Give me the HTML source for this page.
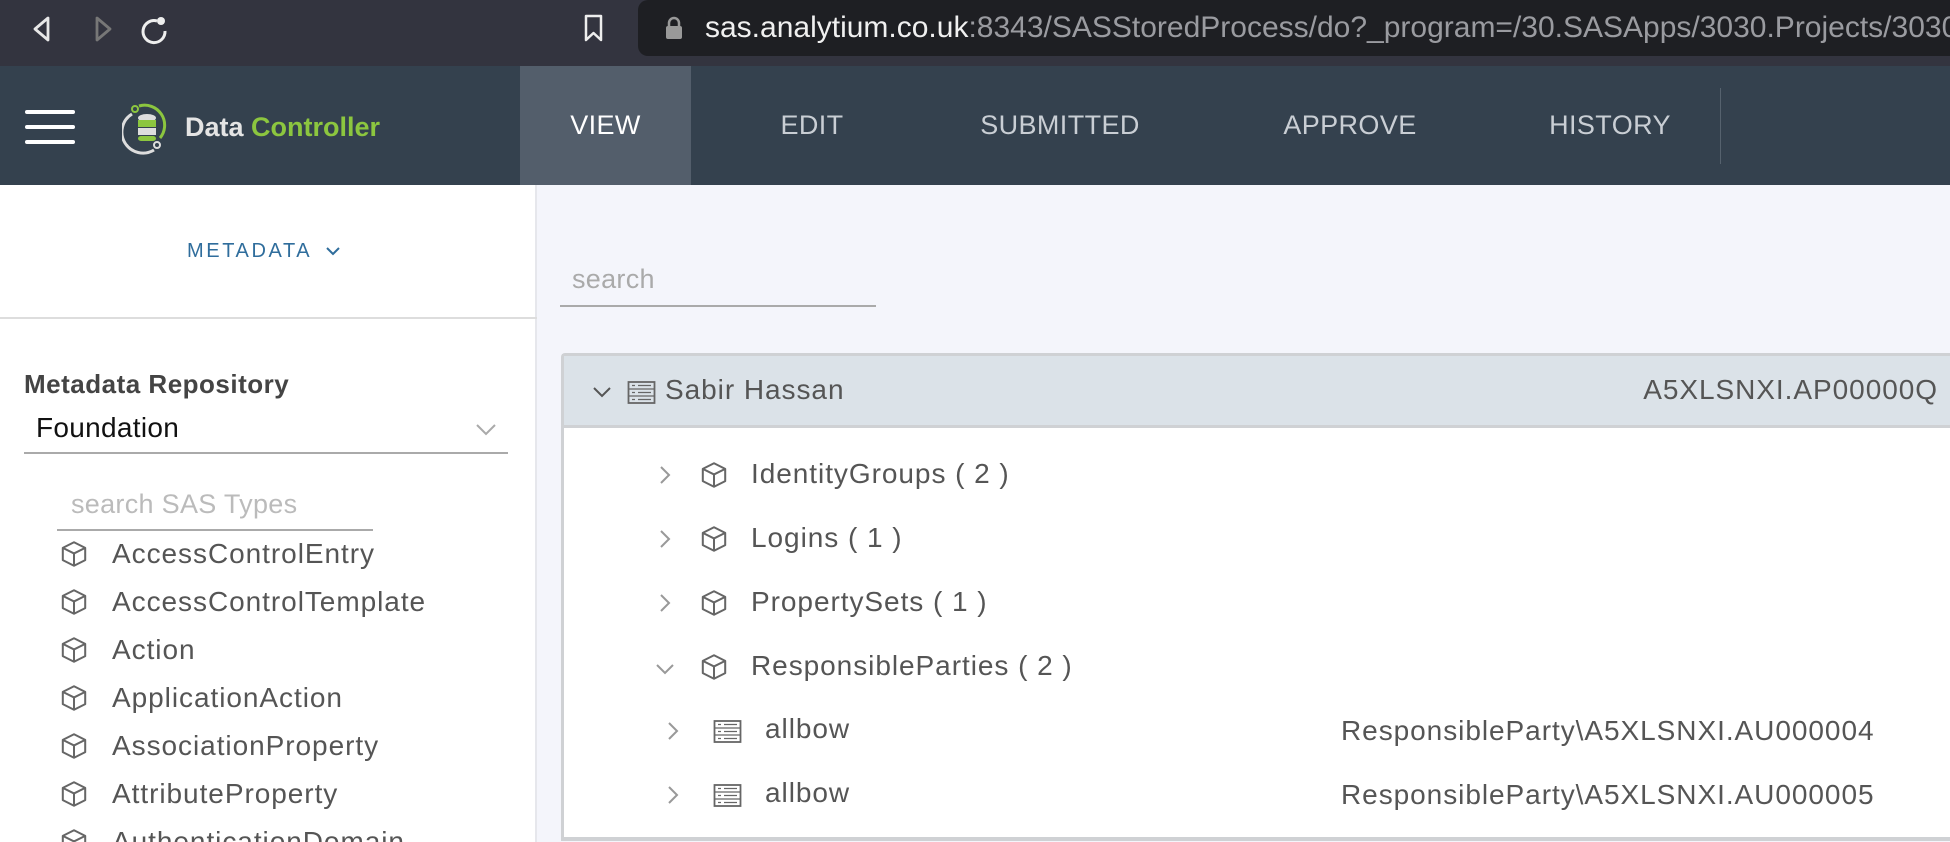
<!DOCTYPE html>
<html><head><meta charset="utf-8"><style>
*{margin:0;padding:0;box-sizing:border-box}
html,body{width:1950px;height:842px;overflow:hidden}
body{background:#f4f5fb;font-family:"Liberation Sans",sans-serif}
#w{position:relative;width:1950px;height:842px;overflow:hidden}
.abs{position:absolute}
.chrome{left:0;top:0;width:1950px;height:66px;background:#33343f}
.url{left:638px;top:0;width:1320px;height:56px;background:#1e1f23;border-radius:10px 0 0 10px}
.nav{left:0;top:66px;width:1950px;height:119px;background:#34414e}
.navi{top:66px;height:119px;line-height:119px;color:#c9ced4;font-size:27px;letter-spacing:.4px}
.side{left:0;top:185px;width:537px;height:657px;background:#fff;border-right:2px solid #e6e7ec}
.t{color:#555;font-size:28px;letter-spacing:.95px;white-space:nowrap}
.panel{left:561px;top:353px;width:1400px;height:487px;background:#fff;border:3px solid #cfd1d4;border-right:none;border-radius:4px 0 0 0}
</style></head><body><div id="w">
<div class="abs chrome"></div>
<svg class="abs" style="left:28px;top:13px" width="160" height="40" viewBox="0 0 160 40">
<path d="M20 5 L7 16 L20 27 Z" fill="none" stroke="#e8e8e8" stroke-width="2.8" stroke-linejoin="round"/>
<path d="M69 5 L82 16 L69 27 Z" fill="none" stroke="#777" stroke-width="2.8" stroke-linejoin="round"/>
<path d="M129 8 A11 11 0 1 0 137 18" fill="none" stroke="#eee" stroke-width="3"/>
<circle cx="133" cy="8" r="4" fill="#eee"/>
</svg>
<svg class="abs" style="left:582px;top:14px" width="24" height="30"><path d="M4 2 H19 V26 L11.5 19 L4 26 Z" fill="none" stroke="#eee" stroke-width="2.5" stroke-linejoin="round"/></svg>
<div class="abs url"></div>
<svg class="abs" style="left:665px;top:16px" width="18" height="24"><path d="M4 10 V7 A5 5 0 0 1 14 7 V10" fill="none" stroke="#999" stroke-width="2.5"/><rect x="1" y="10" width="16" height="13" rx="2" fill="#999"/></svg>
<div class="abs" style="left:705px;top:10px;font-size:30px;color:#f0f0f0;white-space:nowrap;line-height:36px">sas.analytium.co.uk<span style="color:#9a9ba0">:8343/SASStoredProcess/do?_program=/30.SASApps/3030.Projects/3030</span></div>

<div class="abs nav"></div>
<div class="abs" style="left:25px;top:110px;width:50px;height:4px;background:#fff;box-shadow:0 15px 0 #fff,0 30px 0 #fff;border-radius:2px"></div>
<svg class="abs" style="left:122px;top:100px" width="50" height="55" viewBox="0 0 46 55">
<path d="M8 14 A20 20 0 0 0 30 50" fill="none" stroke="#ddd" stroke-width="3"/>
<path d="M15 6 A20 20 0 0 1 36 38" fill="none" stroke="#8cc63f" stroke-width="3"/>
<circle cx="33" cy="45" r="3" fill="none" stroke="#ddd" stroke-width="2"/>
<circle cx="11" cy="9" r="3" fill="none" stroke="#8cc63f" stroke-width="2"/>
<ellipse cx="23" cy="18" rx="9" ry="4" fill="#ddd"/><rect x="14" y="20" width="18" height="7" fill="#8cc63f"/><rect x="14" y="28" width="18" height="7" fill="#ddd"/><rect x="14" y="36" width="18" height="5" rx="3" fill="#8cc63f"/>
</svg>
<div class="abs" style="left:185px;top:109px;font-size:27px;color:#e4e4e4;line-height:36px;font-weight:bold">Data <span style="color:#8cc63f">Controller</span></div>
<div class="abs" style="left:520px;top:66px;width:171px;height:119px;background:#535e6b"></div>
<div class="abs navi" style="left:520px;width:171px;text-align:center;color:#fff">VIEW</div>
<div class="abs navi" style="left:742px;width:140px;text-align:center">EDIT</div>
<div class="abs navi" style="left:960px;width:200px;text-align:center">SUBMITTED</div>
<div class="abs navi" style="left:1260px;width:180px;text-align:center">APPROVE</div>
<div class="abs navi" style="left:1520px;width:180px;text-align:center">HISTORY</div>
<div class="abs" style="left:1720px;top:88px;width:1px;height:76px;background:#56626e"></div>

<div class="abs side"></div>
<div class="abs" style="left:187px;top:240px;font-size:20px;color:#2f6d9c;letter-spacing:2.6px">METADATA</div>
<svg class="abs" style="left:325px;top:245px" width="16" height="12"><path d="M2 3 L8 9 L14 3" fill="none" stroke="#2f6d9c" stroke-width="2"/></svg>
<div class="abs" style="left:0;top:317px;width:537px;height:2px;background:#ddd"></div>
<div class="abs" style="left:24px;top:369px;font-size:26px;font-weight:bold;color:#444;letter-spacing:.5px">Metadata Repository</div>
<div class="abs" style="left:36px;top:412px;font-size:28px;color:#111;letter-spacing:.3px">Foundation</div>
<svg class="abs" style="left:475px;top:422px" width="22" height="16"><path d="M2 3 L11 12 L20 3" fill="none" stroke="#aaa" stroke-width="2"/></svg>
<div class="abs" style="left:24px;top:452px;width:484px;height:2px;background:#aaa"></div>
<div class="abs" style="left:71px;top:489px;font-size:27px;color:#bbb;letter-spacing:.3px">search SAS Types</div>
<div class="abs" style="left:57px;top:529px;width:316px;height:2px;background:#aaa"></div>

<svg width="0" height="0" style="position:absolute"><defs>
<g id="cube"><path d="M12 2 L22 7 V18 L12 23 L2 18 V7 Z M2 7 L12 12 L22 7 M12 12 V23" fill="none" stroke="#666" stroke-width="1.8" stroke-linejoin="round"/></g>
<g id="srv"><rect x="1.5" y="2" width="26" height="21" fill="none" stroke="#666" stroke-width="1.8"/><path d="M1.5 9 H27.5 M1.5 16 H27.5 M5 5.5 H8 M11 5.5 H24 M5 12.5 H8 M11 12.5 H24 M5 19.5 H8 M11 19.5 H24" stroke="#666" stroke-width="1.3"/></g>
<g id="chr"><path d="M5 3 L13 11 L5 19" fill="none" stroke="#999" stroke-width="2"/></g>
<g id="chd"><path d="M2 6 L10 14 L18 6" fill="none" stroke="#999" stroke-width="2"/></g>
</defs></svg>

<div class="abs" style="left:60px;top:530px">
<div style="height:48px;display:flex;align-items:center"><svg width="28" height="28" viewBox="0 0 24 25"><use href="#cube"/></svg><span class="t" style="margin-left:24px">AccessControlEntry</span></div>
<div style="height:48px;display:flex;align-items:center"><svg width="28" height="28" viewBox="0 0 24 25"><use href="#cube"/></svg><span class="t" style="margin-left:24px">AccessControlTemplate</span></div>
<div style="height:48px;display:flex;align-items:center"><svg width="28" height="28" viewBox="0 0 24 25"><use href="#cube"/></svg><span class="t" style="margin-left:24px">Action</span></div>
<div style="height:48px;display:flex;align-items:center"><svg width="28" height="28" viewBox="0 0 24 25"><use href="#cube"/></svg><span class="t" style="margin-left:24px">ApplicationAction</span></div>
<div style="height:48px;display:flex;align-items:center"><svg width="28" height="28" viewBox="0 0 24 25"><use href="#cube"/></svg><span class="t" style="margin-left:24px">AssociationProperty</span></div>
<div style="height:48px;display:flex;align-items:center"><svg width="28" height="28" viewBox="0 0 24 25"><use href="#cube"/></svg><span class="t" style="margin-left:24px">AttributeProperty</span></div>
<div style="height:48px;display:flex;align-items:center"><svg width="28" height="28" viewBox="0 0 24 25"><use href="#cube"/></svg><span class="t" style="margin-left:24px">AuthenticationDomain</span></div>
</div>

<div class="abs" style="left:572px;top:264px;font-size:27px;color:#aaa;letter-spacing:.3px">search</div>
<div class="abs" style="left:560px;top:305px;width:316px;height:2px;background:#aaa"></div>

<div class="abs panel"></div>
<div class="abs" style="left:564px;top:356px;width:1390px;height:72px;background:#dbe2e8;border-bottom:3px solid #cfd1d4"></div>
<svg class="abs" style="left:591px;top:384px" width="22" height="16"><path d="M3 4 L11 12 L19 4" fill="none" stroke="#555" stroke-width="2"/></svg>
<svg class="abs" style="left:627px;top:380px" width="30" height="26"><use href="#srv"/></svg>
<div class="abs t" style="left:665px;top:374px">Sabir Hassan</div>
<div class="abs t" style="left:1500px;top:374px;width:438px;text-align:right">A5XLSNXI.AP00000Q</div>

<svg class="abs" style="left:656px;top:464px" width="20" height="22"><use href="#chr"/></svg>
<svg class="abs" style="left:700px;top:461px" width="28" height="28" viewBox="0 0 24 25"><use href="#cube"/></svg>
<div class="abs t" style="left:751px;top:458px">IdentityGroups ( 2 )</div>
<svg class="abs" style="left:656px;top:528px" width="20" height="22"><use href="#chr"/></svg>
<svg class="abs" style="left:700px;top:525px" width="28" height="28" viewBox="0 0 24 25"><use href="#cube"/></svg>
<div class="abs t" style="left:751px;top:522px">Logins ( 1 )</div>
<svg class="abs" style="left:656px;top:592px" width="20" height="22"><use href="#chr"/></svg>
<svg class="abs" style="left:700px;top:589px" width="28" height="28" viewBox="0 0 24 25"><use href="#cube"/></svg>
<div class="abs t" style="left:751px;top:586px">PropertySets ( 1 )</div>
<svg class="abs" style="left:655px;top:659px" width="22" height="20"><use href="#chd"/></svg>
<svg class="abs" style="left:700px;top:653px" width="28" height="28" viewBox="0 0 24 25"><use href="#cube"/></svg>
<div class="abs t" style="left:751px;top:650px">ResponsibleParties ( 2 )</div>
<svg class="abs" style="left:664px;top:720px" width="20" height="22"><use href="#chr"/></svg>
<svg class="abs" style="left:713px;top:719px" width="30" height="26"><use href="#srv"/></svg>
<div class="abs t" style="left:765px;top:713px">allbow</div>
<div class="abs t" style="left:1341px;top:715px">ResponsibleParty\A5XLSNXI.AU000004</div>
<svg class="abs" style="left:664px;top:784px" width="20" height="22"><use href="#chr"/></svg>
<svg class="abs" style="left:713px;top:783px" width="30" height="26"><use href="#srv"/></svg>
<div class="abs t" style="left:765px;top:777px">allbow</div>
<div class="abs t" style="left:1341px;top:779px">ResponsibleParty\A5XLSNXI.AU000005</div>
<div class="abs" style="left:561px;top:838px;width:1400px;height:3px;background:#cfd1d4"></div>
</div></body></html>
